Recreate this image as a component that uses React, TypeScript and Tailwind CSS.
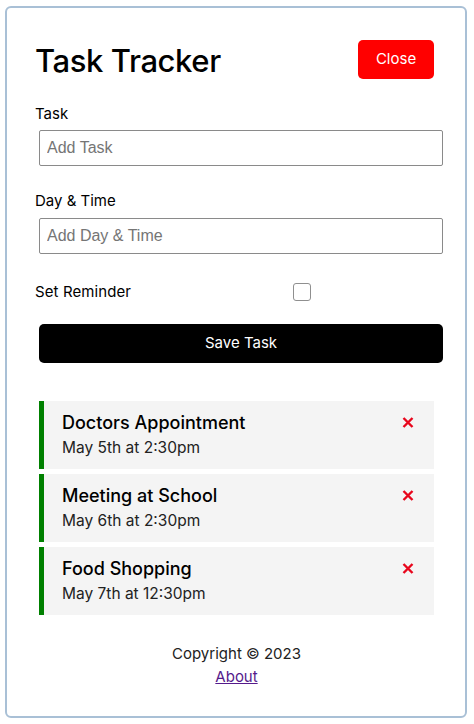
import React from "react";

const tasks = [
  { id: 1, text: "Doctors Appointment", day: "May 5th at 2:30pm" },
  { id: 2, text: "Meeting at School", day: "May 6th at 2:30pm" },
  { id: 3, text: "Food Shopping", day: "May 7th at 12:30pm" },
];

function XIcon() {
  return (
    <svg width="12" height="11" viewBox="0 0 12 11" className="block">
      <path d="M1.5 1 L10.5 10 M10.5 1 L1.5 10" stroke="#e8061c" strokeWidth="2.4" strokeLinecap="butt" />
    </svg>
  );
}

export default function App() {
  const font = { fontFamily: "Inter, 'Noto Sans', sans-serif" };
  return (
    <div className="pt-[6px] pl-[5px] bg-white w-[474px] h-[724px]" style={font}>
      <div className="w-[462px] h-[712px] border-2 border-[#a9c0d6] rounded-[6px] pl-[28px] pr-[27px] pt-[32px] flex flex-col">
        <header className="flex items-center justify-between h-[39px]">
          <h1 className="text-[31px] leading-[39px] font-medium text-black tracking-[-0.4px] pt-[1px]">Task Tracker</h1>
          <button className="w-[76px] h-[39px] mr-[4px] rounded-[5px] bg-[#ff0000] text-white text-[15px]">Close</button>
        </header>

        <label className="mt-[25px] h-[20px] leading-[20px] text-[15px] text-black">Task</label>
        <input
          className="mt-[6px] ml-[4px] w-[404px] h-[36px] border border-[#8a8a8a] rounded-[2px] pl-[7px] text-[16px] placeholder:text-[#757575] outline-none"
          style={{ fontFamily: "'Liberation Sans', Arial, sans-serif" }}
          placeholder="Add Task"
        />

        <label className="mt-[25px] h-[20px] leading-[20px] text-[15px] text-black">Day &amp; Time</label>
        <input
          className="mt-[7px] ml-[4px] w-[404px] h-[36px] border border-[#8a8a8a] rounded-[2px] pl-[7px] text-[16px] placeholder:text-[#757575] outline-none"
          style={{ fontFamily: "'Liberation Sans', Arial, sans-serif" }}
          placeholder="Add Day & Time"
        />

        <div className="mt-[28px] h-[20px] flex items-center">
          <span className="w-[258px] text-[15px] leading-[20px] text-black tracking-[0.1px]">Set Reminder</span>
          <span className="w-[18px] h-[18px] border-[1.5px] border-[#8f8f8f] rounded-[3px] bg-white" />
        </div>

        <button className="mt-[22px] ml-[4px] w-[404px] h-[39px] rounded-[5px] bg-black text-white text-[15px]">Save Task</button>

        <div className="mt-[38px] flex flex-col gap-[5px]">
          {tasks.map((t) => (
            <div key={t.id} className="ml-[4px] w-[395px] h-[68px] bg-[#f4f4f4] border-l-[5px] border-[#008000] pl-[18px] pr-[20px] pt-[10px] flex">
              <div className="flex-1">
                <div className="h-[24px] leading-[24px] text-[18px] font-medium text-black">{t.text}</div>
                <div className="mt-[1px] h-[24px] leading-[24px] text-[15.5px] text-[#222]">{t.day}</div>
              </div>
              <div className="pt-[6px]">
                <XIcon />
              </div>
            </div>
          ))}
        </div>

        <footer className="mt-[29px] flex flex-col items-center">
          <p className="h-[20px] leading-[20px] text-[15px] text-[#222]">Copyright &copy; 2023</p>
          <a href="#" className="mt-[3px] h-[20px] leading-[20px] text-[15px] text-[#551a8b] underline">About</a>
        </footer>
      </div>
    </div>
  );
}
